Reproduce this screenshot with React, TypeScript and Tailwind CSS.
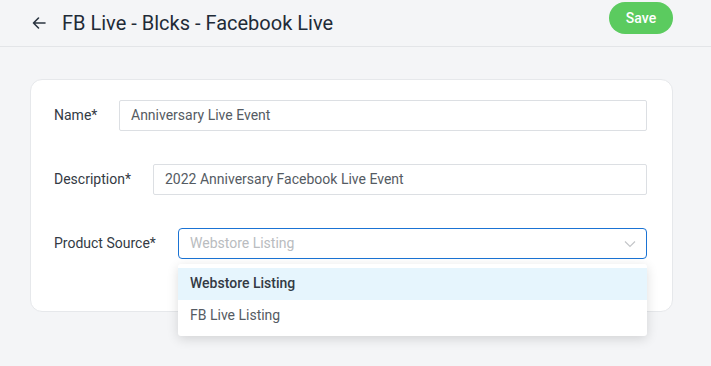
export default function App() {
  return (
    <div
      className="w-[711px] h-[366px] overflow-hidden bg-[#f4f5f7] text-[14px]"
      style={{ fontFamily: "Roboto, 'Liberation Sans', sans-serif" }}
    >
      <div className="h-[47px] flex items-center justify-between border-b border-[#e3e5e8] pl-[31px] pr-[38px]">
        <div className="flex items-center">
          <svg width="16" height="16" viewBox="0 0 16 16" fill="none" stroke="#2a3440" strokeWidth="1.6" strokeLinecap="round" strokeLinejoin="round">
            <path d="M14 8H2.5M7.5 3L2.5 8l5 5" />
          </svg>
          <span className="ml-[15px] text-[20px] text-[#1f2b37] leading-none">FB Live - Blcks - Facebook Live</span>
        </div>
        <button className="w-[64px] h-[32px] -mt-[10px] rounded-full bg-[#5bcb5f] text-white font-medium text-[14px]">
          Save
        </button>
      </div>

      <div className="pt-[32px] pl-[30px] pr-[38px]">
        <div className="bg-white border border-[#e6e8eb] rounded-[12px] h-[233px] pt-[20px] pl-[23px] pr-[25px]">
          <div className="flex items-center h-[31px]">
            <span className="text-[#333a44] w-[65px]">Name*</span>
            <div className="flex-1 h-[31px] border border-[#dcdfe3] rounded-[2px] flex items-center pl-[11px] text-[#555b63]">
              Anniversary Live Event
            </div>
          </div>
          <div className="flex items-center h-[31px] mt-[33px]">
            <span className="text-[#333a44] w-[99px]">Description*</span>
            <div className="flex-1 h-[31px] border border-[#dcdfe3] rounded-[2px] flex items-center pl-[11px] text-[#555b63]">
              2022 Anniversary Facebook Live Event
            </div>
          </div>
          <div className="flex items-center h-[31px] mt-[33px]">
            <span className="text-[#333a44] w-[124px]">Product Source*</span>
            <div className="flex-1 relative">
              <div className="h-[31px] border border-[#1a73d4] rounded-[4px] flex items-center justify-between pl-[11px] pr-[10px] text-[#b9bcc0]">
                <span>Webstore Listing</span>
                <svg width="12" height="8" viewBox="0 0 12 8" fill="none" stroke="#c4c6c9" strokeWidth="1.2">
                  <path d="M1 1.5l5 5 5-5" />
                </svg>
              </div>
              <div className="absolute left-0 right-0 top-[36px] bg-white rounded-[3px] py-[4px] shadow-[0_3px_12px_rgba(0,0,0,0.14)] z-10">
                <div className="h-[32px] bg-[#e6f5fd] flex items-center pl-[12px] pb-[1px] text-[#333a44] font-medium">
                  Webstore Listing
                </div>
                <div className="h-[32px] flex items-center pl-[12px] pb-[1px] text-[#555b63]">FB Live Listing</div>
              </div>
            </div>
          </div>
        </div>
      </div>
    </div>
  )
}
